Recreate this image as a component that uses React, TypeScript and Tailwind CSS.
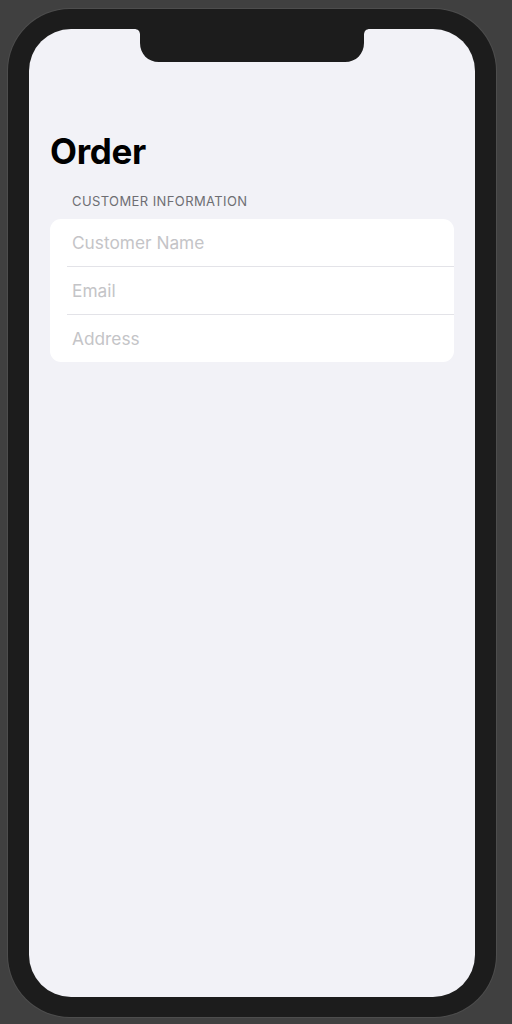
import React from "react";

const fields = ["Customer Name", "Email", "Address"];

// Notch cut-out at the top of the display, with the little curved "ears"
function Notch() {
  return (
    <svg
      className="absolute left-1/2 top-0 -translate-x-1/2"
      width="236"
      height="34"
      viewBox="0 0 236 34"
    >
      <path
        d="M0 0 H236 C232 0 230 2 230 6 V14 C230 25 222 33 211 33 H25 C14 33 6 25 6 14 V6 C6 2 4 0 0 0 Z"
        fill="#1c1c1c"
      />
    </svg>
  );
}

function FormRow({ label, last }: { label: string; last: boolean }) {
  return (
    <div className="pl-[17px]">
      <div
        className={`h-[47px] flex items-center pl-[5px] ${
          last ? "" : "border-b border-[#e3e3e8] h-[48px]"
        }`}
      >
        <input
          placeholder={label}
          className="w-full bg-transparent outline-none text-[17.3px] text-black placeholder:text-[#c4c4c7]"
        />
      </div>
    </div>
  );
}

export default function App() {
  return (
    <div
      className="w-[512px] h-[1024px] bg-[#404040] pt-[9px] pl-[8px]"
      style={{ fontFamily: "Inter, 'Noto Sans', sans-serif" }}
    >
      <div className="w-[488px] h-[1008px] rounded-[62px] bg-[#1c1c1c] ring-1 ring-[#4d4d4d] px-[21px] py-[20px]">
        <div className="relative h-full rounded-[42px] bg-[#f2f2f7] overflow-hidden">
          <Notch />
          <div className="px-[21px] pt-[102px]">
            <h1 className="text-[35px] leading-[40px] font-bold text-black tracking-[-0.3px]">
              Order
            </h1>
            <div className="mt-[22px] pl-[22px] text-[13px] leading-[16px] text-[#6e6e73] uppercase tracking-[0.4px]">
              Customer Information
            </div>
            <div className="mt-[10px] bg-white rounded-[11px]">
              {fields.map((f, i) => (
                <FormRow key={f} label={f} last={i === fields.length - 1} />
              ))}
            </div>
          </div>
        </div>
      </div>
    </div>
  );
}
